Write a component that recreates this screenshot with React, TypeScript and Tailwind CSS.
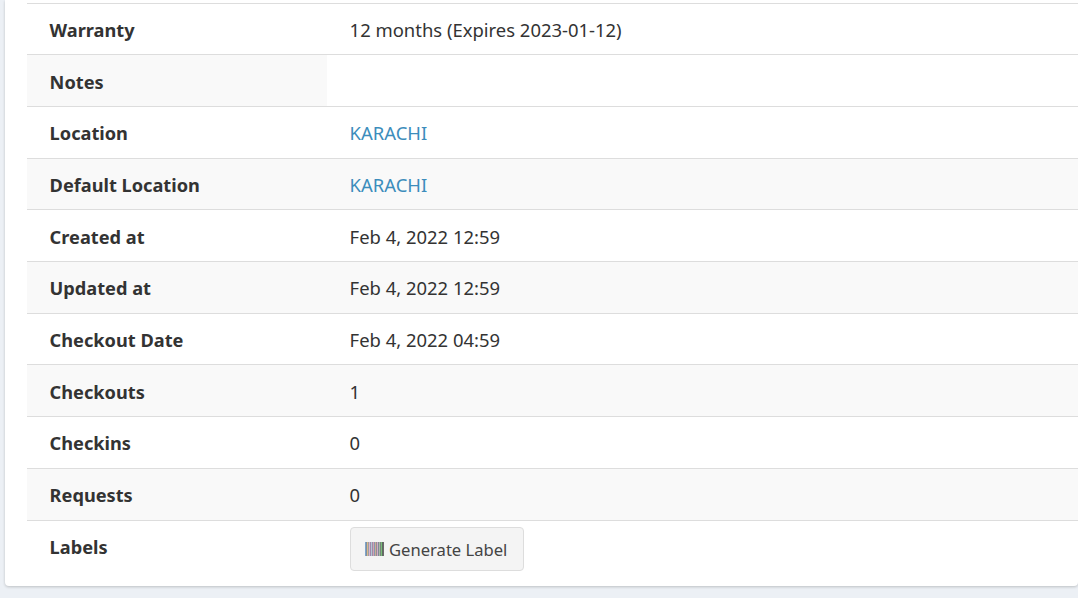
import React from 'react';

type Row = { label: string; value?: string; link?: boolean; striped?: boolean; stripeValue?: boolean };

const rows: Row[] = [
  { label: 'Warranty', value: '12 months (Expires 2023-01-12)' },
  { label: 'Notes', striped: true },
  { label: 'Location', value: 'KARACHI', link: true },
  { label: 'Default Location', value: 'KARACHI', link: true, striped: true, stripeValue: true },
  { label: 'Created at', value: 'Feb 4, 2022 12:59' },
  { label: 'Updated at', value: 'Feb 4, 2022 12:59', striped: true, stripeValue: true },
  { label: 'Checkout Date', value: 'Feb 4, 2022 04:59' },
  { label: 'Checkouts', value: '1', striped: true, stripeValue: true },
  { label: 'Checkins', value: '0' },
  { label: 'Requests', value: '0', striped: true, stripeValue: true },
];

// 1px columns, the icon has coloured fringes in the reference
const stripes = [
  '#7fa5cb', '#7f8f9f', '#dcb98a', '#9a9fa5', '#dcb4cf', '#a088aa', '#b4c4d4', '#9b8fa6', '#d4a0b6', '#8598b0',
  '#c8b090', '#96889a', '#d0aec4', '#7f8a95', '#a8b8a8', '#77857a', '#78bc78', '#5f6a62', '#6a6a6a',
];

const Barcode = () => (
  <svg width="19" height="14" viewBox="0 0 19 14" className="shrink-0">
    {stripes.map((color, i) => (
      <rect key={i} x={i} y="0" width="1" height="14" fill={color} />
    ))}
  </svg>
);

export default function App() {
  return (
    <div className="h-[598px] overflow-hidden bg-[#ecf0f5] pl-[5px] font-['Noto_Sans','Open_Sans',sans-serif] text-[18.45px] text-[#333]">
      <div className="h-[586px] rounded-b-[4px] bg-white pl-[22px] pt-[2.65px] shadow-[0_1px_3px_rgba(0,0,0,0.2)]">
        {rows.map((row) => (
          <div key={row.label} className="flex h-[51.7px] border-t border-[#ddd]">
            <div className={`flex w-[300px] shrink-0 items-center pl-[22.6px] pt-[3px] text-[18.2px] font-bold ${row.striped ? 'bg-[#f9f9f9]' : ''}`}>
              {row.label}
            </div>
            <div className={`flex flex-1 items-center pl-[22.6px] pt-[1.5px] ${row.stripeValue ? 'bg-[#f9f9f9]' : ''} ${row.link ? 'text-[#3c8dbc]' : ''}`}>
              {row.value}
            </div>
          </div>
        ))}
        <div className="flex border-t border-[#ddd]">
          <div className="w-[300px] shrink-0 pl-[22.6px] pt-[13px] text-[18.2px] font-bold">Labels</div>
          <div className="pl-[23px] pt-[6px]">
            <button className="flex h-[44px] w-[174px] items-center gap-[5px] rounded-[4px] border border-[#ddd] bg-[#f4f4f4] pl-[14px] text-[16.6px] text-[#444]">
              <Barcode />
              <span className="pt-[3px]">Generate Label</span>
            </button>
          </div>
        </div>
      </div>
    </div>
  );
}
